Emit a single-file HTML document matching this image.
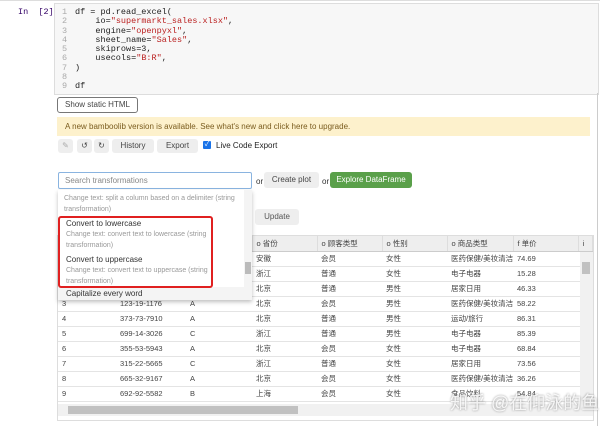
<html><head><style>
body{margin:0;width:600px;height:426px;overflow:hidden;background:#fff;font-family:"Liberation Sans","Noto Sans CJK SC",sans-serif;font-size:8px;color:#333;position:relative}
.a{position:absolute}
.code{font-family:"Liberation Mono",monospace;font-size:8.5px;line-height:9.3px;white-space:pre}
.s{color:#b22}
.btn{position:absolute;background:#eee;border-radius:3px;text-align:center;color:#444;font-size:8px}
table{border-collapse:collapse;font-size:7.5px;color:#444;table-layout:fixed}
td{height:15px;border-bottom:1px solid #e4e4e4;padding:0 0 0 4px;white-space:nowrap;overflow:hidden}
th{height:15px;background:#eee;font-weight:normal;text-align:left;padding:0 0 0 4px;border-right:1px solid #ddd;border-bottom:1px solid #ccc}
</style></head><body>
<div class="a" style="left:0;top:0;width:600px;height:1px;background:#ddd"></div>
<div class="a code" style="left:18px;top:8px;color:#306">In  [2]:</div>
<div class="a" style="left:54px;top:3px;width:543px;height:90px;background:#f7f7f7;border:1px solid #ddd"></div>
<div class="a code" style="left:62px;top:8px;color:#aaa">1
2
3
4
5
6
7
8
9</div>
<div class="a code" style="left:75px;top:8px;color:#222">df = pd.read_excel(
    io=<span class="s">"supermarkt_sales.xlsx"</span>,
    engine=<span class="s">"openpyxl"</span>,
    sheet_name=<span class="s">"Sales"</span>,
    skiprows=3,
    usecols=<span class="s">"B:R"</span>,
)

df</div>
<div class="a" style="left:597px;top:93px;width:1px;height:333px;background:#ccc"></div>
<div class="a" style="left:57px;top:97px;width:79px;height:14px;border:1px solid #777;border-radius:3px;text-align:center;line-height:14px;color:#444">Show static HTML</div>
<div class="a" style="left:57px;top:117px;width:533px;height:19px;background:#fdf1cc;line-height:19px;padding-left:8px;box-sizing:border-box;color:#7a5c1e">A new bamboolib version is available. See what's new and click here to upgrade.</div>
<div class="btn" style="left:58px;top:139px;width:15px;height:14px;line-height:14px;color:#aaa">✎</div>
<div class="btn" style="left:77px;top:139px;width:15px;height:14px;line-height:14px">↺</div>
<div class="btn" style="left:94px;top:139px;width:15px;height:14px;line-height:14px">↻</div>
<div class="btn" style="left:112px;top:139px;width:42px;height:14px;line-height:14px">History</div>
<div class="btn" style="left:157px;top:139px;width:41px;height:14px;line-height:14px">Export</div>
<div class="a" style="left:203px;top:141px;width:8px;height:8px;background:#1a73e8;border-radius:1px;color:#fff;font-size:7px;line-height:8px;text-align:center">✓</div>
<div class="a" style="left:216px;top:141px;color:#222">Live Code Export</div>
<div class="a" style="left:58px;top:172px;width:194px;height:17px;border:1px solid #8ab4e0;border-radius:2px;box-sizing:border-box;line-height:15px;padding-left:6px;color:#888">Search transformations</div>
<div class="a" style="left:256px;top:177px">or</div>
<div class="btn" style="left:264px;top:172px;width:55px;height:16px;line-height:16px">Create plot</div>
<div class="a" style="left:322px;top:177px">or</div>
<div class="btn" style="left:330px;top:172px;width:82px;height:16px;line-height:16px;background:#5aa04a;color:#fff">Explore DataFrame</div>
<div class="btn" style="left:255px;top:209px;width:44px;height:16px;line-height:16px;color:#555">Update</div>
<div class="a" style="left:57px;top:235px;width:535px;height:184px;border:1px solid #ddd;overflow:hidden">
<table style="width:535px">
<col style="width:58px"><col style="width:70px"><col style="width:66px"><col style="width:65px"><col style="width:65px"><col style="width:65px"><col style="width:66px"><col style="width:65px"><col>
<tr><th></th><th></th><th></th><th>o 省份</th><th>o 顾客类型</th><th>o 性别</th><th>o 商品类型</th><th>f 单价</th><th>i</th></tr>
<tr><td>0</td><td>750-67-8428</td><td>A</td><td>安徽</td><td>会员</td><td>女性</td><td>医药保健/美妆清洁</td><td>74.69</td><td></td></tr>
<tr><td>1</td><td>226-31-3081</td><td>C</td><td>浙江</td><td>普通</td><td>女性</td><td>电子电器</td><td>15.28</td><td></td></tr>
<tr><td>2</td><td>631-41-3108</td><td>A</td><td>北京</td><td>普通</td><td>男性</td><td>居家日用</td><td>46.33</td><td></td></tr>
<tr><td>3</td><td>123-19-1176</td><td>A</td><td>北京</td><td>会员</td><td>男性</td><td>医药保健/美妆清洁</td><td>58.22</td><td></td></tr>
<tr><td>4</td><td>373-73-7910</td><td>A</td><td>北京</td><td>普通</td><td>男性</td><td>运动/旅行</td><td>86.31</td><td></td></tr>
<tr><td>5</td><td>699-14-3026</td><td>C</td><td>浙江</td><td>普通</td><td>男性</td><td>电子电器</td><td>85.39</td><td></td></tr>
<tr><td>6</td><td>355-53-5943</td><td>A</td><td>北京</td><td>会员</td><td>女性</td><td>电子电器</td><td>68.84</td><td></td></tr>
<tr><td>7</td><td>315-22-5665</td><td>C</td><td>浙江</td><td>普通</td><td>女性</td><td>居家日用</td><td>73.56</td><td></td></tr>
<tr><td>8</td><td>665-32-9167</td><td>A</td><td>北京</td><td>会员</td><td>女性</td><td>医药保健/美妆清洁</td><td>36.26</td><td></td></tr>
<tr><td>9</td><td>692-92-5582</td><td>B</td><td>上海</td><td>会员</td><td>女性</td><td>食品饮料</td><td>54.84</td><td></td></tr>
</table>
<div class="a" style="left:0;top:168px;width:535px;height:12px;background:#f1f1f1"></div>
<div class="a" style="left:10px;top:170px;width:230px;height:8px;background:#c1c1c1"></div>
<div class="a" style="left:522px;top:16px;width:13px;height:152px;background:#f1f1f1"></div>
<div class="a" style="left:524px;top:26px;width:8px;height:12px;background:#c1c1c1"></div>
</div>
<div class="a" style="left:58px;top:190px;width:194px;height:110px;background:#fff;box-shadow:0 2px 4px rgba(0,0,0,.25);overflow:hidden">
<div class="a" style="left:6px;top:3px;color:#999;width:180px;line-height:11px;font-size:7px">Change text: split a column based on a delimiter (string transformation)</div>
<div class="a" style="left:8px;top:28px;color:#333;line-height:11px">Convert to lowercase</div>
<div class="a" style="left:8px;top:39px;color:#999;width:170px;line-height:11px;font-size:7px">Change text: convert text to lowercase (string transformation)</div>
<div class="a" style="left:8px;top:64px;color:#333;line-height:11px">Convert to uppercase</div>
<div class="a" style="left:8px;top:75px;color:#999;width:170px;line-height:11px;font-size:7px">Change text: convert text to uppercase (string transformation)</div>
<div class="a" style="left:0;top:97px;width:186px;height:13px;background:#f4f4f4;line-height:13px;padding-left:8px;box-sizing:border-box;color:#333">Capitalize every word</div>
<div class="a" style="left:186px;top:0;width:8px;height:110px;background:#f4f4f4"></div>
<div class="a" style="left:187px;top:72px;width:6px;height:12px;background:#bbb"></div>
<div class="a" style="left:0;top:26px;width:155px;height:72px;border:2px solid #e02020;border-radius:3px;box-sizing:border-box"></div>
</div>
<div class="a" style="left:450px;top:389px;font-size:18px;color:rgba(255,255,255,.85);text-shadow:0 0 2px #888">知乎 @在仰泳的鱼</div>
</body></html>
